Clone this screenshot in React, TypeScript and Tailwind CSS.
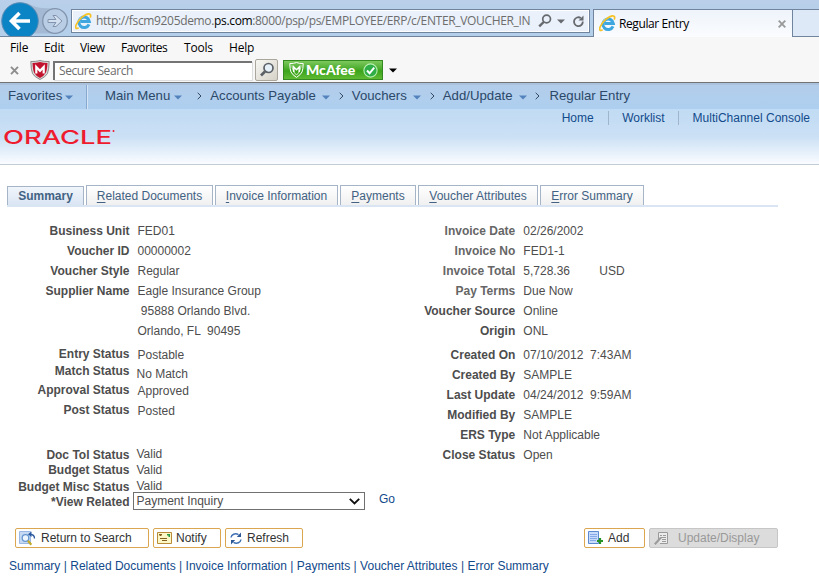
import React from "react";

const ui = "font-['Open_Sans',sans-serif]";

const menus = [
  { label: "File", cls: "w-[34px] tracking-[-0.2px]" },
  { label: "Edit", cls: "w-9 tracking-[-0.3px]" },
  { label: "View", cls: "w-[41px] tracking-[-0.4px]" },
  { label: "Favorites", cls: "w-[63px] tracking-[-0.5px]" },
  { label: "Tools", cls: "w-[45px] tracking-[-0.2px]" },
  { label: "Help", cls: "tracking-[-0.2px]" },
];

const crumbs = ["Accounts Payable", "Vouchers", "Add/Update"];

const tabs = [
  { label: "Related Documents", cls: "w-[127px]" },
  { label: "Invoice Information", cls: "w-[123px]" },
  { label: "Payments", cls: "w-[76px]" },
  { label: "Voucher Attributes", cls: "w-[120px]" },
  { label: "Error Summary", cls: "w-[104px]" },
];

const leftLabels = [
  { text: "Business Unit", cls: "" },
  { text: "Voucher ID", cls: "mt-1" },
  { text: "Voucher Style", cls: "mt-1" },
  { text: "Supplier Name", cls: "mt-1" },
  { text: "Entry Status", cls: "mt-[47px]" },
  { text: "Match Status", cls: "mt-px" },
  { text: "Approval Status", cls: "mt-[3px]" },
  { text: "Post Status", cls: "mt-1" },
  { text: "Doc Tol Status", cls: "mt-[29px]" },
  { text: "Budget Status", cls: "-mt-px" },
  { text: "Budget Misc Status", cls: "mt-px" },
  { text: "*View Related", cls: "-mt-px" },
];

const leftValues = [
  { text: "FED01", cls: "" },
  { text: "00000002", cls: "mt-1" },
  { text: "Regular", cls: "mt-1" },
  { text: "Eagle Insurance Group", cls: "mt-1" },
  { text: " 95888 Orlando Blvd.", cls: "mt-1" },
  { text: "Orlando, FL  90495", cls: "mt-1" },
  { text: "Postable", cls: "mt-2" },
  { text: "No Match", cls: "mt-[3px] -ml-px" },
  { text: "Approved", cls: "mt-px" },
  { text: "Posted", cls: "mt-1" },
  { text: "Valid", cls: "mt-[27px] -ml-px" },
  { text: "Valid", cls: "-ml-px" },
  { text: "Valid", cls: "-ml-px" },
];

const rightRows = [
  { label: "Invoice Date", value: "02/26/2002", cls: "text-[#666]" },
  { label: "Invoice No", value: "FED1-1", cls: "mt-1 text-[#666]" },
  { label: "Invoice Total", value: "5,728.36", extra: "USD", cls: "mt-1 text-[#666]" },
  { label: "Pay Terms", value: "Due Now", cls: "mt-1 text-[#666]" },
  { label: "Voucher Source", value: "Online", cls: "mt-1" },
  { label: "Origin", value: "ONL", cls: "mt-1" },
  { label: "Created On", value: "07/10/2012  7:43AM", cls: "mt-2" },
  { label: "Created By", value: "SAMPLE", cls: "mt-1" },
  { label: "Last Update", value: "04/24/2012  9:59AM", cls: "mt-1" },
  { label: "Modified By", value: "SAMPLE", cls: "mt-1" },
  { label: "ERS Type", value: "Not Applicable", cls: "mt-1" },
  { label: "Close Status", value: "Open", cls: "mt-1" },
];

const links = ["Summary", "Related Documents", "Invoice Information", "Payments", "Voucher Attributes", "Error Summary"];

const IeIcon = () => (
  <svg width="17" height="17" viewBox="0 0 17 17" className="shrink-0" fill="none">
    <path d="M14 11.400a5.300 5.300 0 1 1 .4-2.800H5.600" stroke="#3fa7df" strokeWidth="3" />
    <path d="M4 8c.3-2.500 2.200-4.300 4.700-4.500" stroke="#a5def8" strokeWidth="1.100" />
    <path d="M3.600 14.800C.8 16.600.1 14.600 1.200 11.800 3.300 6.500 9.800 1.100 13.700.9c2-.1 2.400 1.500 1.500 3.700" stroke="#f5c327" strokeWidth="1.700" />
  </svg>
);

const Caret = ({ className = "" }: { className?: string }) => (
  <svg width="8" height="5" viewBox="0 0 8 5" className={`shrink-0 ${className}`}>
    <path d="M0 .5h8L4 4.500z" fill="currentColor" />
  </svg>
);

const Chevron = () => (
  <svg width="5" height="8" viewBox="0 0 5 8" className="shrink-0" fill="none">
    <path d="M.7.8 4 4 .7 7.200" stroke="#33475f" strokeWidth="1" />
  </svg>
);

const AddressBar = () => (
  <div className="flex h-[37px] items-start border-b border-[#70849e] bg-linear-to-b from-[#b9cfea] to-[#b3cfea]">
    <svg width="71" height="36" viewBox="0 0 71 36" className="shrink-0">
      <path d="M27 3c9 5 15 5.500 28 5.500v25H28z" fill="#a4b9d3" />
      <circle cx="20" cy="21" r="18.300" fill="#0a84c4" stroke="#5c8db5" strokeWidth="1" />
      <path d="M30 21H12M19.500 13l-8 8 8 8" fill="none" stroke="#fff" strokeWidth="3.600" />
      <circle cx="55" cy="21" r="12.300" fill="#b9cde5" stroke="#8294ad" strokeWidth="1.300" />
      <path d="M48 19.500h8l-3-4h3l6 5.500-6 5.500h-3l3-4h-8z" fill="#d3e0f0" stroke="#8294ad" strokeWidth="1" />
    </svg>
    <div className="mt-[9px] flex h-6 w-[519px] items-center border border-[#70849e] bg-[#eaf1fa] pl-[3px] ring-1 ring-inset ring-white">
      <IeIcon />
      <div className={`ml-[4px] h-[19px] w-[439px] overflow-hidden whitespace-pre text-[12px] leading-[18px] tracking-[-0.34px] text-[#6d6d6d] ${ui}`}>
        http://fscm9205demo.<span className="text-black">ps.com</span>:8000/psp/ps/EMPLOYEE/ERP/c/ENTER_VOUCHER_IN
      </div>
      <svg width="14" height="14" viewBox="0 0 14 14" className="ml-[3px] shrink-0" fill="none" stroke="#66696e">
        <circle cx="8.600" cy="5" r="3.900" strokeWidth="1.700" />
        <path d="M5.700 8 1.200 12.400" strokeWidth="2.400" />
      </svg>
      <Caret className="ml-[5px] text-[#66696e]" />
      <svg width="13" height="13" viewBox="0 0 13 13" className="ml-[7px] shrink-0" fill="none">
        <path d="M10.800 6.500A4.400 4.400 0 1 1 8.800 3" stroke="#66696e" strokeWidth="1.800" />
        <path d="M6.500 5.500h5V.5z" fill="#66696e" />
      </svg>
    </div>
    <div className="mt-[9px] ml-[3px] flex h-7 w-[200px] items-center border border-b-0 border-[#70849e] bg-linear-to-b from-[#eef4fb] to-[#fbfcfe] pl-[5px]">
      <IeIcon />
      <span className={`ml-[3px] text-[12px] leading-4 tracking-[-0.4px] text-black ${ui}`}>Regular Entry</span>
      <svg width="8" height="8" viewBox="0 0 8 8" className="mr-[6px] ml-auto shrink-0">
        <path d="M.7.7l6.600 6.600M7.300.7.7 7.300" stroke="#9a9a9a" strokeWidth="1.900" />
      </svg>
    </div>
    <div className="mt-[9px] h-[27px] flex-1 border-t border-[#70849e] bg-[#dde9f7]" />
  </div>
);

const McAfeeBar = () => (
  <div className="flex h-[22px] items-center">
    <svg width="9" height="9" viewBox="0 0 9 9" className="ml-[10px] shrink-0">
      <path d="M1 .8l7 7.400M8 .8 1 8.200" stroke="#8d8d8d" strokeWidth="1.900" />
    </svg>
    <svg width="20" height="20" viewBox="0 0 20 20" className="ml-[11px] shrink-0">
      <path d="M.8 1.500q5 .3 9.200-1 4.200 1.300 9.200 1-.2 8-1.700 12Q15.500 17 10 19.500 4.500 17 2.500 13.500 1 9.500.8 1.500z" fill="#d8d8d8" stroke="#777" strokeWidth=".8" />
      <path d="M2.500 3q4.300 0 7.500-1 3.200 1 7.500 1-.3 6.500-1.700 9.700Q14 16 10 18 6 16 4.100 12.700 2.800 9.500 2.500 3z" fill="#c3142f" />
      <path d="M6.300 13.500V7L10 10.800 13.700 7v6.500" fill="none" stroke="#fff" strokeWidth="2.200" />
    </svg>
    <div className={`ml-[3px] flex h-[19px] w-[199px] items-center border-t-2 border-l-2 border-[#747474] bg-white pl-[4px] text-[12px] tracking-[-0.4px] text-[#6d6d6d] shadow-[1px_1px_0_#ddd] ${ui}`}>
      Secure Search
    </div>
    <div className="ml-[3px] flex h-[22px] w-[23px] items-center justify-center rounded-[2px] border border-[#aaa69b] bg-linear-to-br from-[#f8f7f3] to-[#d5d2c8]">
      <svg width="16" height="16" viewBox="0 0 16 16" fill="none">
        <circle cx="9.500" cy="6" r="4.500" fill="#e6f0f8" stroke="#5b6066" strokeWidth="1.700" />
        <path d="M6 9.500 2 13.500" stroke="#5b6066" strokeWidth="2.700" />
      </svg>
    </div>
    <div className="ml-[5px] flex h-5 w-[100px] items-center border border-[#348a20] bg-linear-to-b from-[#7cc95c] via-[#3aa41b] via-55% to-[#5fba33] pl-[5px]">
      <svg width="15" height="16" viewBox="0 0 15 16" className="shrink-0" fill="none" stroke="#fff">
        <path d="M.8 1.500q4 .2 6.700-1 2.700 1.200 6.700 1-.1 6-1.200 8.500Q11.500 13 7.500 15.400 3.500 13 2 10 .9 7.500.8 1.500z" />
        <path d="M4.800 10V5l2.700 2.700L10.200 5v5" strokeWidth="1.500" />
        <path d="M3 3.200q.2 6 4.500 9.800Q11.800 9.200 12 3.200" strokeWidth=".7" />
      </svg>
      <span className="ml-[2px] w-[50px] text-[14px] leading-4 font-black tracking-[0px] text-white font-['Lato',sans-serif]">McAfee</span>
      <svg width="15" height="15" viewBox="0 0 15 15" className="ml-[7px] shrink-0" fill="none" stroke="#fff">
        <circle cx="7.500" cy="7.500" r="6.600" fill="#2fae48" strokeWidth="1.100" stroke="#b9efb0" />
        <path d="m4 7.500 2.600 2.800L11.200 4.600" strokeWidth="2" />
      </svg>
    </div>
    <Caret className="ml-[6px] text-black" />
  </div>
);

const OracleHeader = () => (
  <>
    <div className="flex h-[26px] items-center border-t-2 border-[#aac2dc] bg-linear-to-b from-[#b3cdea] to-[#aecff0] text-[13.200px] leading-4 text-[#2b4869]">
      <div className="flex h-full w-[87px] items-center border-r border-[#87a9d0] pb-[2px] pl-2">
        Favorites
        <Caret className="mt-[3px] ml-[3px] text-[#5482bd]" />
      </div>
      <div className="flex h-full items-center border-l border-[#d5e5f6] pb-[2px] pl-[17px]">
        Main Menu
        <Caret className="mt-[3px] ml-[4px] text-[#5482bd]" />
        <div className="ml-[15px] flex items-center">
          {crumbs.map((c) => (
            <React.Fragment key={c}>
              <Chevron />
              <span className="ml-2">{c}</span>
              <Caret className="mt-[3px] mr-[8.500px] ml-[6.500px] text-[#5482bd]" />
            </React.Fragment>
          ))}
          <Chevron />
          <span className="ml-[9px]">Regular Entry</span>
        </div>
      </div>
    </div>
    <div className="flex h-[56px] items-start justify-between border-b border-[#c3ccd4] bg-linear-to-b from-[#c0dbf3] via-[#cbe0f5] to-[#fafcff]">
      <svg width="118" height="22" viewBox="0 0 118 22" className="mt-[18px] ml-[2px]">
        <text x="1" y="17" textLength="109" lengthAdjust="spacingAndGlyphs" fontFamily="Inter" fontSize="19" fontWeight="500" fill="#ee1c2e">ORACLE</text>
        <circle cx="111.500" cy="4" r="1" fill="#ee1c2e" />
      </svg>
      <div className="mt-[2px] mr-[9px] flex h-[14px] items-center text-[12px] text-[#124a8b]">
        <span className="pr-[14px]">Home</span>
        <span className="border-l border-[#9fb5cc] px-[13.500px] leading-[14px]">Worklist</span>
        <span className="border-l border-[#9fb5cc] pl-[13.500px] leading-[14px]">MultiChannel Console</span>
      </div>
    </div>
  </>
);

const Button = ({ icon, label, cls }: { icon: React.ReactNode; label: string; cls: string }) => (
  <button className={`flex h-5 items-center rounded-[2px] border border-[#dba650] bg-white text-[12px] leading-4 text-[#333] ${cls}`}>
    {icon}
    {label}
  </button>
);

const SearchIcon = () => (
  <svg width="17" height="15" viewBox="0 0 17 15" className="mr-[5px] shrink-0" fill="none">
    <path d="M.5.5h11v12H.5z" fill="#c5d9f3" stroke="#9bb9e2" />
    <circle cx="6.500" cy="7" r="3.300" fill="#edf6ff" stroke="#6796ce" strokeWidth="1.300" />
    <path d="m9 9.800 3.300 4" stroke="#c5a928" strokeWidth="2.200" />
    <path d="M15.500 7.500c0-3-1.500-4.200-4.500-4.200" stroke="#27579d" strokeWidth="1.300" />
    <path d="m9 3.300 3.500-2.800v5.600z" fill="#27579d" />
  </svg>
);

const NotifyIcon = () => (
  <svg width="15" height="12" viewBox="0 0 15 12" className="mr-[4px] shrink-0">
    <path d="M.5.5h14v11H.5z" fill="#fdf7c5" stroke="#b78b3a" />
    <path d="M2 2.500h3M2.500 3.500h2M3 6.500h7M5 8.500h5" stroke="#84611e" />
    <path d="M10 2h3v3h-1.500V3.500H10z" fill="#299743" />
  </svg>
);

const RefreshIcon = () => (
  <svg width="12" height="13" viewBox="0 0 12 13" className="mr-[5px] shrink-0" fill="none">
    <path d="M1 5.500C1.500 2.500 5 .7 8.500 2.600M11 7.500C10.500 10.500 7 12.300 3.500 10.400" stroke="#3e70b3" strokeWidth="1.500" />
    <path d="M11 .5v4.500H6.800zM1 12.500V8h4.200z" fill="#2b5796" />
  </svg>
);

const AddIcon = () => (
  <svg width="15" height="14" viewBox="0 0 15 14" className="mr-[5px] shrink-0">
    <path d="M.5.5h10v12H.5z" fill="#c8dbfb" stroke="#5b8ad0" />
    <path d="M2 3.500h7M2 5.500h7M2 7.500h7M2 9.500h6" stroke="#86aae7" />
    <path d="M12 7v6M9 10h6" stroke="#269326" strokeWidth="2.200" />
  </svg>
);

const UpdateIcon = () => (
  <svg width="14" height="13" viewBox="0 0 14 13" className="mr-[10px] shrink-0" fill="none" stroke="#9b9b9b">
    <path d="M4.500 7V.5h9v11H6" fill="#ececec" />
    <path d="M6 3.500h2M9 3.500h3M7 5.500h5M8 7.500h4M8 9.500h4" />
    <path d="M.8 12.200 7 5.500" strokeWidth="2" />
  </svg>
);

export default function App() {
  return (
    <div className="h-[586px] w-[819px] overflow-hidden bg-white text-[12px] text-[#4d4d4d] font-['Liberation_Sans',Arial,sans-serif]">
      <AddressBar />
      <div className="h-[46px] border-b border-[#737373] bg-[#f7f7f7]">
        <div className={`flex h-[22px] items-center pl-[10px] text-[12px] text-black ${ui}`}>
          {menus.map((m) => (
            <span key={m.label} className={`shrink-0 ${m.cls}`}>{m.label}</span>
          ))}
        </div>
        <McAfeeBar />
      </div>
      <OracleHeader />

      <div className="mt-5 ml-[7px] flex h-[22px] w-[771px] items-end gap-[2px] border-b-2 border-[#dae5f3] text-[#426283]">
        <div className="flex h-[19px] w-[77px] items-center justify-center border border-b-0 border-[#a6b4c8] bg-linear-to-b from-[#f1f5fb] to-[#dae5f3] font-bold">Summary</div>
        {tabs.map((t) => (
          <div key={t.label} className={`flex h-5 shrink-0 items-center justify-center border border-b-0 border-[#a6b4c8] bg-linear-to-b from-white to-[#f0f0f0] ${t.cls}`}>
            <span className="first-letter:underline underline-offset-2 inline-block">{t.label}</span>
          </div>
        ))}
      </div>

      <div className="flex h-[305px] pt-4 leading-4 whitespace-pre">
        <div className="w-[129.500px] text-right font-bold">
          {leftLabels.map((l) => (
            <div key={l.text} className={`h-4 ${l.cls}`}>{l.text}</div>
          ))}
        </div>
        <div className="w-[246.500px] pl-2">
          {leftValues.map((v, i) => (
            <div key={i} className={`h-4 ${v.cls}`}>{v.text}</div>
          ))}
          <div className="-mt-[2px] -ml-[4.500px] flex h-[18px] w-[232px] items-center justify-between border border-[#707070] pr-1 pl-[2.500px]">
            Payment Inquiry
            <svg width="11" height="7" viewBox="0 0 11 7" fill="none">
              <path d="m.8.8 4.700 4.700L10.200.8" stroke="#111" strokeWidth="1.900" />
            </svg>
          </div>
        </div>
        <div className="mt-[268px] ml-[3px] w-4 text-[#124a8b]">Go</div>
        <div className="flex-1">
          {rightRows.map((r) => (
            <div key={r.label} className={`flex h-4 ${r.cls}`}>
              <span className="w-[120.300px] text-right font-bold">{r.label}</span>
              <span className="ml-[8px] w-[76px] text-[#4d4d4d]">{r.value}</span>
              {r.extra && <span className="text-[#4d4d4d]">{r.extra}</span>}
            </div>
          ))}
        </div>
      </div>

      <div className="mt-4 ml-[15px] flex w-[763px] gap-1">
        <Button icon={<SearchIcon />} label="Return to Search" cls="w-[134px] pl-[3px]" />
        <Button icon={<NotifyIcon />} label="Notify" cls="w-[68px] pl-[3px]" />
        <Button icon={<RefreshIcon />} label="Refresh" cls="w-[78px] pl-[4px]" />
        <Button icon={<AddIcon />} label="Add" cls="ml-auto w-[61px] pl-[3px]" />
        <button className="flex h-5 w-[129px] items-center rounded-[2px] border border-[#c6c6c6] bg-[#dcdcdc] pl-[4px] text-[12px] leading-4 text-[#999]">
          <UpdateIcon />
          Update/Display
        </button>
      </div>

      <div className="mt-[10px] ml-[9px] flex leading-4 text-[#124a8b]">
        {links.map((l, i) => (
          <React.Fragment key={l}>
            {i > 0 && <span className="px-[3.400px]">|</span>}
            <span>{l}</span>
          </React.Fragment>
        ))}
      </div>
    </div>
  );
}
